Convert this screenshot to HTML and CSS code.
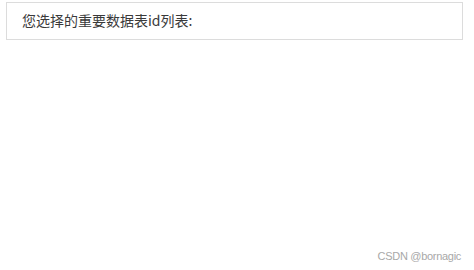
FILE: index.html
```html
<!DOCTYPE html>
<html>
<head>
<meta charset="utf-8">
<link rel="stylesheet" href="styles.css">
</head>
<body>
<div class="page">
  <div class="panel">您选择的重要数据表id列表:</div>
  <div class="spacer"></div>
  <div class="footer"><span class="mark">CSDN @bornagic</span></div>
</div>
</body>
</html>
```
FILE: styles.css
```css
html, body {
  margin: 0;
  padding: 0;
  background: #fff;
}
.page {
  width: 474px;
  height: 270px;
  display: flex;
  flex-direction: column;
  box-sizing: border-box;
  padding: 2px 11px 0 6px;
}
.panel {
  height: 38px;
  box-sizing: border-box;
  border: 1px solid #dcdcdc;
  padding: 0 0 3px 15px;
  display: flex;
  align-items: center;
  font-family: "Noto Sans CJK SC", "Liberation Sans", sans-serif;
  font-size: 14px;
  color: #3a3a3a;
}
.spacer {
  flex: 1;
}
.footer {
  display: flex;
  justify-content: flex-end;
  padding: 0 2px 8px 0;
}
.mark {
  font-family: "Liberation Sans", Arial, sans-serif;
  font-size: 11px;
  letter-spacing: -0.3px;
  color: #a8a8a8;
}
```
